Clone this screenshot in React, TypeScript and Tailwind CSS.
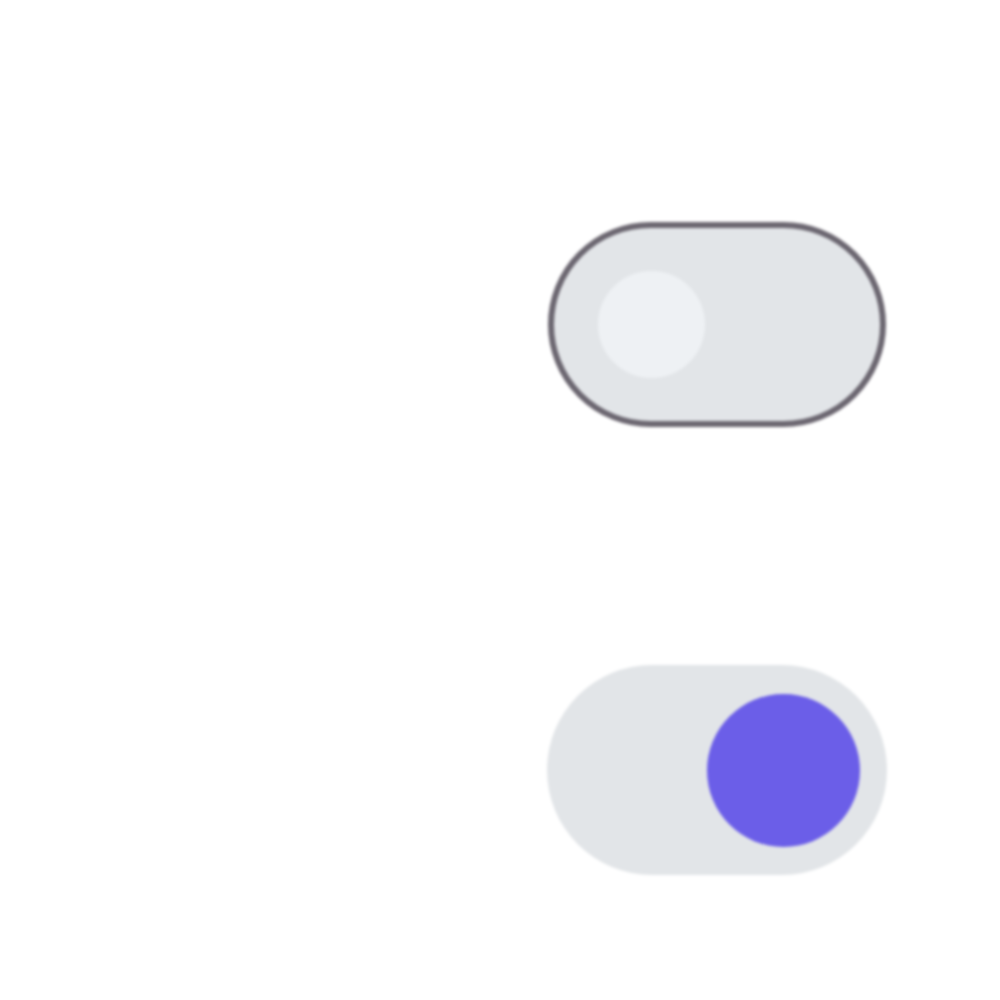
import React from "react";

export default function App() {
  return (
    <div className="w-[1000px] h-[1000px] bg-white pl-[548px] pt-[222px] flex flex-col gap-[238px] blur-[1.5px]">
      <div className="w-[338px] h-[205px] rounded-full border-[6px] border-[#6b6670] bg-[#e2e5e8] flex items-center pl-[44px]">
        <div className="w-[107px] h-[107px] rounded-full bg-[#eef1f4]" />
      </div>
      <div className="w-[340px] h-[210px] -ml-px rounded-full bg-[#e2e5e8] flex items-center justify-end pr-[27px]">
        <div className="w-[153px] h-[153px] rounded-full bg-[#6b5ee8]" />
      </div>
    </div>
  );
}
